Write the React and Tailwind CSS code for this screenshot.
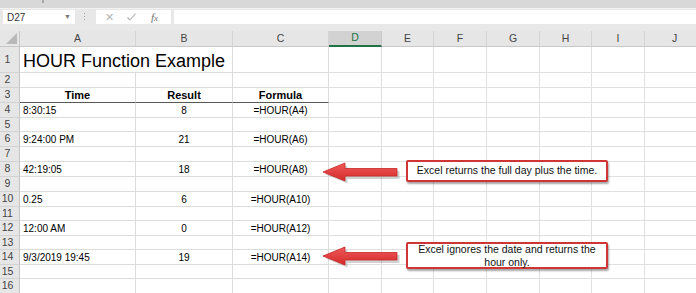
import React from "react";

const cols = [
  { l: "", w: "w-[20px]" },
  { l: "A", w: "w-[116px]" },
  { l: "B", w: "w-[97px]" },
  { l: "C", w: "w-[96px]" },
  { l: "D", w: "w-[53px]" },
  { l: "E", w: "w-[52px]" },
  { l: "F", w: "w-[53px]" },
  { l: "G", w: "w-[53px]" },
  { l: "H", w: "w-[52px]" },
  { l: "I", w: "w-[53px]" },
  { l: "J", w: "w-[60px]" },
];

const rows = [
  { n: 1, h: "h-[26px]", title: "HOUR Function Example" },
  { n: 2, h: "h-[15px]" },
  { n: 3, h: "h-[15px]", a: "Time", b: "Result", c: "Formula", head: true },
  { n: 4, h: "h-[15px]", a: "8:30:15", b: "8", c: "=HOUR(A4)" },
  { n: 5, h: "h-[14px]" },
  { n: 6, h: "h-[15px]", a: "9:24:00 PM", b: "21", c: "=HOUR(A6)" },
  { n: 7, h: "h-[15px]" },
  { n: 8, h: "h-[15px]", a: "42:19:05", b: "18", c: "=HOUR(A8)" },
  { n: 9, h: "h-[15px]" },
  { n: 10, h: "h-[15px]", a: "0.25", b: "6", c: "=HOUR(A10)" },
  { n: 11, h: "h-[14px]" },
  { n: 12, h: "h-[15px]", a: "12:00 AM", b: "0", c: "=HOUR(A12)" },
  { n: 13, h: "h-[14px]" },
  { n: 14, h: "h-[15px]", a: "9/3/2019 19:45", b: "19", c: "=HOUR(A14)" },
  { n: 15, h: "h-[14px]" },
  { n: 16, h: "h-[15px]" },
];

function Arrow({ top }) {
  return (
    <svg
      className="absolute left-[318px]"
      style={{ top }}
      width="86"
      height="24"
      viewBox="0 0 86 24"
    >
      <defs>
        <linearGradient id={"ag" + top} x1="0" y1="0" x2="0" y2="1">
          <stop offset="0" stopColor="#f05a5a" />
          <stop offset="1" stopColor="#d42a2a" />
        </linearGradient>
      </defs>
      <polygon
        points="6,12 28,3 28,8.5 80,8.5 80,16.5 28,16.5 28,21"
        fill="#000"
        opacity="0.18"
        transform="translate(1.5,1.5)"
      />
      <polygon
        points="5,11 27,2 27,7.5 79,7.5 79,15 27,15 27,20"
        fill={"url(#ag" + top + ")"}
        stroke="#c82626"
        strokeWidth="0.8"
      />
    </svg>
  );
}

export default function App() {
  return (
    <div className="relative w-[696px] h-[293px] overflow-hidden bg-white font-['Liberation_Sans',Arial,sans-serif]">
      {/* top strip */}
      <div className="h-[9px] bg-[#d8d8d8] border-b border-[#f2f2f2] relative">
        <div className="absolute left-[42px] top-0 w-[2px] h-[3px] bg-[#a8a8a8]" />
      </div>
      {/* formula bar */}
      <div className="h-[22px] bg-[#e8e8e8] flex items-start">
        <div className="ml-[3px] mt-[1px] w-[72px] h-[14px] bg-white flex items-center justify-between px-[4px]">
          <span className="text-[10px] text-[#333]">D27</span>
          <span className="text-[7px] text-[#777]">▼</span>
        </div>
        <div className="ml-[9px] mt-[4px] flex flex-col gap-[2px]">
          <div className="w-[1px] h-[1px] bg-[#a0a0a0]" />
          <div className="w-[1px] h-[1px] bg-[#a0a0a0]" />
          <div className="w-[1px] h-[1px] bg-[#a0a0a0]" />
        </div>
        <div className="ml-[11px] mt-[1px] w-[75px] h-[14px] bg-white flex items-center text-[#b4b4b4]">
          <span className="ml-[9px] text-[11px] leading-none">✕</span>
          <svg className="ml-[13px]" width="9" height="8" viewBox="0 0 9 8">
            <polyline points="0.5,4.5 3,7 8.5,0.5" fill="none" stroke="#b0b0b0" strokeWidth="1.1" />
          </svg>
          <span className="ml-[15px] text-[11px] leading-none italic text-[#707070] font-['Liberation_Serif',serif]">
            f<span className="text-[9px]">x</span>
          </span>
        </div>
        <div className="ml-[3px] mt-[1px] flex-1 h-[14px] bg-white" />
      </div>

      {/* column header */}
      <div className="flex h-[16px] bg-[#e6e6e6]">
        {cols.map((c, i) =>
          i === 0 ? (
            <div key={i} className="w-[20px] shrink-0 border-r border-b border-[#c8c8c8] relative">
              <svg className="absolute right-[2px] bottom-[2px]" width="11" height="11" viewBox="0 0 11 11">
                <polygon points="11,0 11,11 0,11" fill="#b8b8b8" />
              </svg>
            </div>
          ) : c.l === "D" ? (
            <div
              key={i}
              className={`${c.w} shrink-0 border-r border-[#c8c8c8] bg-[#d2d2d2] border-b-2 border-b-[#217346] flex items-center justify-center text-[10.5px] text-[#217346]`}
            >
              {c.l}
            </div>
          ) : (
            <div
              key={i}
              className={`${c.w} shrink-0 border-r border-b border-[#d4d4d4] border-b-[#c8c8c8] flex items-center justify-center text-[10.5px] text-[#444]`}
            >
              {c.l}
            </div>
          )
        )}
      </div>

      {/* rows */}
      {rows.map((r) => (
        <div key={r.n} className={`flex ${r.h}`}>
          <div className="w-[20px] shrink-0 bg-[#e6e6e6] border-r border-b border-[#d2d2d2] border-r-[#c4c4c4] flex items-center justify-center pr-[4px] text-[10.5px] text-[#444]">
            {r.n}
          </div>
          {/* A */}
          <div
            className={`w-[116px] shrink-0 border-b flex items-center ${
              r.title ? "border-r-0" : "border-r"
            } ${r.head ? "border-b-[#595959] justify-center font-bold" : "border-[#dcdcdc]"} ${
              r.head ? "border-r-[#dcdcdc]" : ""
            }`}
          >
            {r.title ? (
              <span className="pl-[3px] pt-[4px] whitespace-nowrap text-[18px] text-black relative z-10">
                {r.title}
              </span>
            ) : r.a ? (
              <span className={`whitespace-nowrap text-black ${r.head ? "text-[11px]" : "pl-[3px] text-[10px]"}`}>
                {r.a}
              </span>
            ) : null}
          </div>
          {/* B */}
          <div
            className={`w-[97px] shrink-0 border-r border-b flex items-center justify-center ${
              r.head ? "border-b-[#595959] border-r-[#dcdcdc] font-bold" : "border-[#dcdcdc]"
            }`}
          >
            {r.b ? (
              <span className={`text-black ${r.head ? "text-[11px]" : "text-[10px]"}`}>{r.b}</span>
            ) : null}
          </div>
          {/* C */}
          <div
            className={`w-[96px] shrink-0 border-r border-b flex items-center justify-center ${
              r.head ? "border-b-[#595959] border-r-[#dcdcdc] font-bold" : "border-[#dcdcdc]"
            }`}
          >
            {r.c ? (
              <span className={`whitespace-nowrap text-black ${r.head ? "text-[11px]" : "text-[10px]"}`}>
                {r.c}
              </span>
            ) : null}
          </div>
          {cols.slice(4).map((c, i) => (
            <div key={i} className={`${c.w} shrink-0 border-r border-b border-[#e0e0e0]`} />
          ))}
        </div>
      ))}

      {/* callouts */}
      <Arrow top={161} />
      <Arrow top={245} />
      <div className="absolute left-[406px] top-[160px] w-[202px] h-[22px] bg-white border-2 border-[#cf3535] rounded-[2px] shadow-[1px_2px_2px_rgba(0,0,0,0.35)] flex items-center justify-center text-[10.5px] text-[#111]">
        Excel returns the full day plus the time.
      </div>
      <div className="absolute left-[406px] top-[242px] w-[202px] h-[27px] bg-white border-2 border-[#cf3535] rounded-[2px] shadow-[1px_2px_2px_rgba(0,0,0,0.35)] flex flex-col items-center justify-center text-[10.5px] leading-[13px] text-[#111]">
        <span>Excel ignores the date and returns the</span>
        <span>hour only.</span>
      </div>
    </div>
  );
}
